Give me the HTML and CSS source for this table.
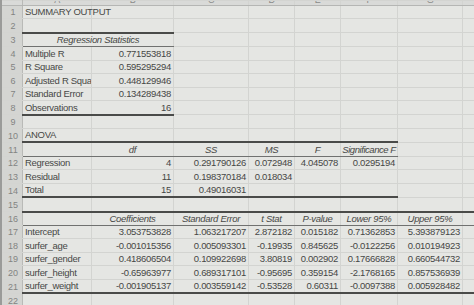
FILE: index.html
```html
<!DOCTYPE html>
<html>
<head>
<meta charset="utf-8">
<link rel="stylesheet" href="styles.css">
</head>
<body>
<div class="sheet">
<table class="grid">
<colgroup>
<col class="c-rh"><col class="c-a"><col class="c-b"><col class="c-c"><col class="c-d"><col class="c-e"><col class="c-f"><col class="c-g"><col class="c-h">
</colgroup>
<tr class="colhead">
<td class="rh corner"></td><td><span class="lt">A</span></td><td><span class="lt">B</span></td><td><span class="lt">C</span></td><td><span class="lt">D</span></td><td><span class="lt">E</span></td><td><span class="lt">F</span></td><td><span class="lt">G</span></td><td><span class="lt">H</span></td>
</tr>
<tr><td class="rh">1</td><td class="ov">SUMMARY OUTPUT</td><td></td><td></td><td></td><td></td><td></td><td></td><td></td></tr>
<tr><td class="rh">2</td><td></td><td></td><td></td><td></td><td></td><td></td><td></td><td></td></tr>
<tr><td class="rh">3</td><td class="tk hd it" colspan="2">Regression Statistics</td><td></td><td></td><td></td><td></td><td></td><td></td></tr>
<tr><td class="rh">4</td><td>Multiple R</td><td class="n">0.771553818</td><td></td><td></td><td></td><td></td><td></td><td></td></tr>
<tr><td class="rh">5</td><td>R Square</td><td class="n">0.595295294</td><td></td><td></td><td></td><td></td><td></td><td></td></tr>
<tr><td class="rh">6</td><td>Adjusted R Square</td><td class="n">0.448129946</td><td></td><td></td><td></td><td></td><td></td><td></td></tr>
<tr><td class="rh">7</td><td>Standard Error</td><td class="n">0.134289438</td><td></td><td></td><td></td><td></td><td></td><td></td></tr>
<tr><td class="rh">8</td><td class="bk">Observations</td><td class="n bk">16</td><td></td><td></td><td></td><td></td><td></td><td></td></tr>
<tr><td class="rh">9</td><td></td><td></td><td></td><td></td><td></td><td></td><td></td><td></td></tr>
<tr><td class="rh">10</td><td>ANOVA</td><td></td><td></td><td></td><td></td><td></td><td></td><td></td></tr>
<tr><td class="rh">11</td><td class="tk hd"></td><td class="tk hd it">df</td><td class="tk hd it">SS</td><td class="tk hd it">MS</td><td class="tk hd it">F</td><td class="tk hd it sig">Significance F</td><td></td><td></td></tr>
<tr><td class="rh">12</td><td>Regression</td><td class="n">4</td><td class="n">0.291790126</td><td class="n">0.072948</td><td class="n">4.045078</td><td class="n">0.0295194</td><td></td><td></td></tr>
<tr><td class="rh">13</td><td>Residual</td><td class="n">11</td><td class="n">0.198370184</td><td class="n">0.018034</td><td></td><td></td><td></td><td></td></tr>
<tr><td class="rh">14</td><td class="bk">Total</td><td class="n bk">15</td><td class="n bk">0.49016031</td><td class="bk"></td><td class="bk"></td><td class="bk"></td><td></td><td></td></tr>
<tr><td class="rh">15</td><td></td><td></td><td></td><td></td><td></td><td></td><td></td><td></td></tr>
<tr><td class="rh">16</td><td class="tk hd"></td><td class="tk hd it">Coefficients</td><td class="tk hd it">Standard Error</td><td class="tk hd it">t Stat</td><td class="tk hd it">P-value</td><td class="tk hd it">Lower 95%</td><td class="tk hd it">Upper 95%</td><td class="tk hd"></td></tr>
<tr><td class="rh">17</td><td>Intercept</td><td class="n">3.053753828</td><td class="n">1.063217207</td><td class="n">2.872182</td><td class="n">0.015182</td><td class="n">0.71362853</td><td class="n">5.393879123</td><td></td></tr>
<tr><td class="rh">18</td><td>surfer_age</td><td class="n">-0.001015356</td><td class="n">0.005093301</td><td class="n">-0.19935</td><td class="n">0.845625</td><td class="n">-0.0122256</td><td class="n">0.010194923</td><td></td></tr>
<tr><td class="rh">19</td><td>surfer_gender</td><td class="n">0.418606504</td><td class="n">0.109922698</td><td class="n">3.80819</td><td class="n">0.002902</td><td class="n">0.17666828</td><td class="n">0.660544732</td><td></td></tr>
<tr><td class="rh">20</td><td>surfer_height</td><td class="n">-0.65963977</td><td class="n">0.689317101</td><td class="n">-0.95695</td><td class="n">0.359154</td><td class="n">-2.1768165</td><td class="n">0.857536939</td><td></td></tr>
<tr><td class="rh">21</td><td class="bk">surfer_weight</td><td class="n bk">-0.001905137</td><td class="n bk">0.003559142</td><td class="n bk">-0.53528</td><td class="n bk">0.60311</td><td class="n bk">-0.0097388</td><td class="n bk">0.005928482</td><td class="bk"></td></tr>
<tr><td class="rh">22</td><td></td><td></td><td></td><td></td><td></td><td></td><td></td><td></td></tr>
</table>
</div>
</body>
</html>
```

FILE: styles.css
```css
html, body {
  margin: 0;
  padding: 0;
  background: #e5e6e3;
  overflow: hidden;
}
.sheet {
  width: 474px;
  height: 305px;
  overflow: hidden;
  border-left: 2px solid #9a9b99;
  box-sizing: border-box;
}
.grid {
  border-collapse: collapse;
  table-layout: fixed;
  width: 510px;
  font-family: "Liberation Sans", Arial, sans-serif;
  font-size: 9.5px;
  letter-spacing: -0.3px;
  color: #474846;
  margin-left: -2px;
}
.c-rh { width: 22px; }
.c-a { width: 69px; }
.c-b { width: 82px; }
.c-c { width: 75px; }
.c-d { width: 46px; }
.c-e { width: 46px; }
.c-f { width: 57px; }
.c-g { width: 65px; }
.c-h { width: 48px; }
.grid td {
  height: 12.45px;
  padding: 0 2px 0 2px;
  border: 1px solid #d3d4d1;
  white-space: nowrap;
  overflow: hidden;
  vertical-align: bottom;
  line-height: 12px;
}
.grid td.ov { overflow: visible; }
.grid tr.colhead td {
  height: 4px;
  line-height: 4px;
  background: #d9dad8;
  border-bottom: 1px solid #b5b6b4;
  text-align: center;
  vertical-align: top;
  color: #8a8b89;
}
.lt {
  display: block;
  margin-top: -6px;
  line-height: 10px;
  font-size: 9px;
}
.grid td.rh {
  background: #d4d5d2;
  color: #838482;
  text-align: center;
  padding: 0 0 0 3px;
  border-right: 1px solid #b9bab7;
  letter-spacing: 0;
  font-size: 9px;
}
.grid td.n { text-align: right; }
.grid td.it {
  font-style: italic;
  text-align: center;
  padding: 0;
}
.grid td.sig { letter-spacing: -0.45px; }
.grid td.tk { border-top: 2px solid #4a4b49; }
.grid td.hd { border-bottom: 1px solid #707170; }
.grid td.bk { border-bottom: 2px solid #4a4b49; }
```
